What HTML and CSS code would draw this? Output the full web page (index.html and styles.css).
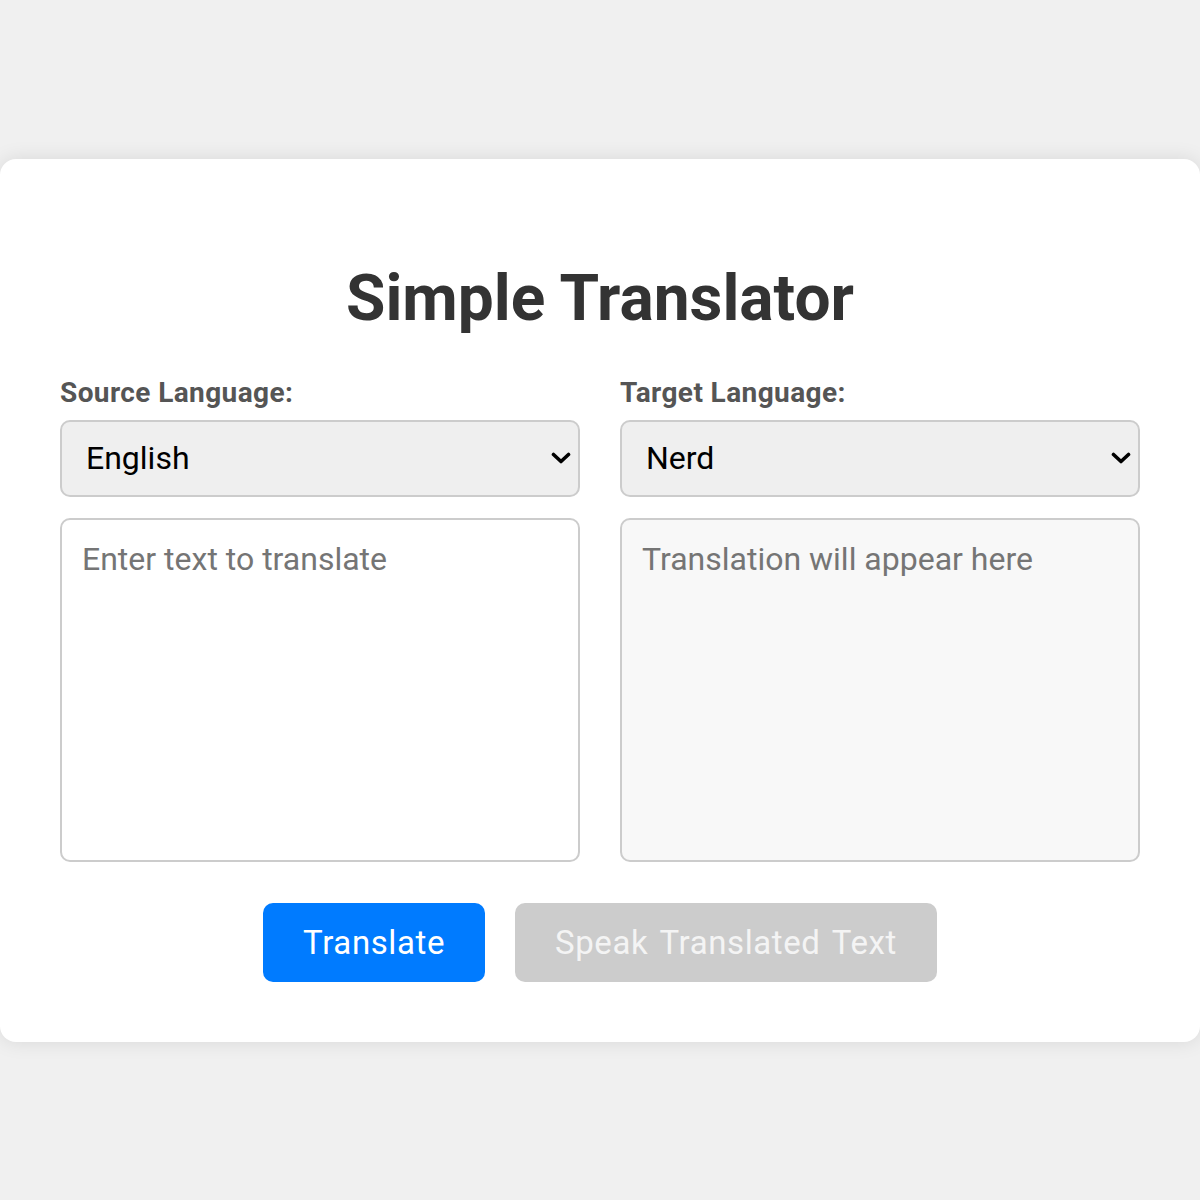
FILE: index.html
```html
<!DOCTYPE html>
<html lang="en">
<head>
  <meta charset="UTF-8" />
  <meta name="viewport" content="width=device-width, initial-scale=1.0" />
  <title>Simple Translator</title>
  <link rel="stylesheet" href="styles.css">
</head>
<body>

  <div class="container">
    <h1>Simple Translator</h1>

    <div class="panels">
      <div class="panel">
        <label for="sourceLang">Source Language:</label>
        <select id="sourceLang">
          <option>English</option>
          <option>Spanish</option>
          <option>French</option>
        </select>
        <textarea id="inputText" placeholder="Enter text to translate"></textarea>
      </div>

      <div class="panel">
        <label for="targetLang">Target Language:</label>
        <select id="targetLang">
          <option>Nerd</option>
          <option>Pirate</option>
          <option>Yoda</option>
        </select>
        <textarea id="outputText" class="output" placeholder="Translation will appear here" readonly></textarea>
      </div>
    </div>

    <div class="actions">
      <button class="btn primary" id="translateBtn">Translate</button>
      <button class="btn speak" id="speakBtn" disabled>Speak Translated Text</button>
    </div>
  </div>

</body>
</html>
```

FILE: styles.css
```css
* {
  box-sizing: border-box;
  font-family: 'Roboto', 'Liberation Sans', sans-serif;
}

body {
  margin: 0;
  height: 100vh;
  background: #f0f0f0;
  display: flex;
  align-items: center;
  justify-content: center;
}

.container {
  width: 100%;
  background: #fff;
  border-radius: 16px;
  box-shadow: 0 0 20px rgba(0, 0, 0, 0.1);
  padding: 60px;
}

h1 {
  text-align: center;
  color: #333;
  font-size: 64px;
  font-weight: 700;
  margin: 42px 0 40px;
}

.panels {
  display: grid;
  grid-template-columns: 1fr 1fr;
  gap: 40px;
}

.panel {
  display: flex;
  flex-direction: column;
}

.panel label {
  display: block;
  font-size: 28px;
  font-weight: 700;
  letter-spacing: 0.4px;
  color: #555;
  margin-bottom: 11px;
}

.panel select {
  appearance: none;
  -webkit-appearance: none;
  width: 100%;
  height: 77px;
  padding: 0 50px 0 24px;
  font-size: 32px;
  color: #000;
  background: #efefef url("data:image/svg+xml;utf8,<svg xmlns='http://www.w3.org/2000/svg' width='20' height='14' viewBox='0 0 20 14'><path d='M2.5 3.5 L10 10.5 L17.5 3.5' fill='none' stroke='black' stroke-width='3.6' stroke-linecap='round' stroke-linejoin='round'/></svg>") no-repeat right 7px center;
  border: 2px solid #ccc;
  border-radius: 10px;
}

.panel textarea {
  width: 100%;
  height: 344px;
  margin-top: 21px;
  padding: 20px;
  font-size: 32px;
  border: 2px solid #ccc;
  border-radius: 10px;
  resize: none;
  background: #fff;
}

.panel textarea::placeholder { color: #757575; }

.panel textarea.output { background: #f8f8f8; }

.actions {
  display: flex;
  justify-content: center;
  gap: 30px;
  margin-top: 41px;
}

.btn {
  font-size: 33px;
  line-height: 39px;
  letter-spacing: 0.6px;
  word-spacing: 3px;
  padding: 20px 40px;
  border: none;
  border-radius: 10px;
  cursor: pointer;
}

.primary {
  background: #007bff;
  color: #fff;
}

.speak {
  background: #ccc;
  color: #f4f4f4;
  cursor: not-allowed;
}
```
